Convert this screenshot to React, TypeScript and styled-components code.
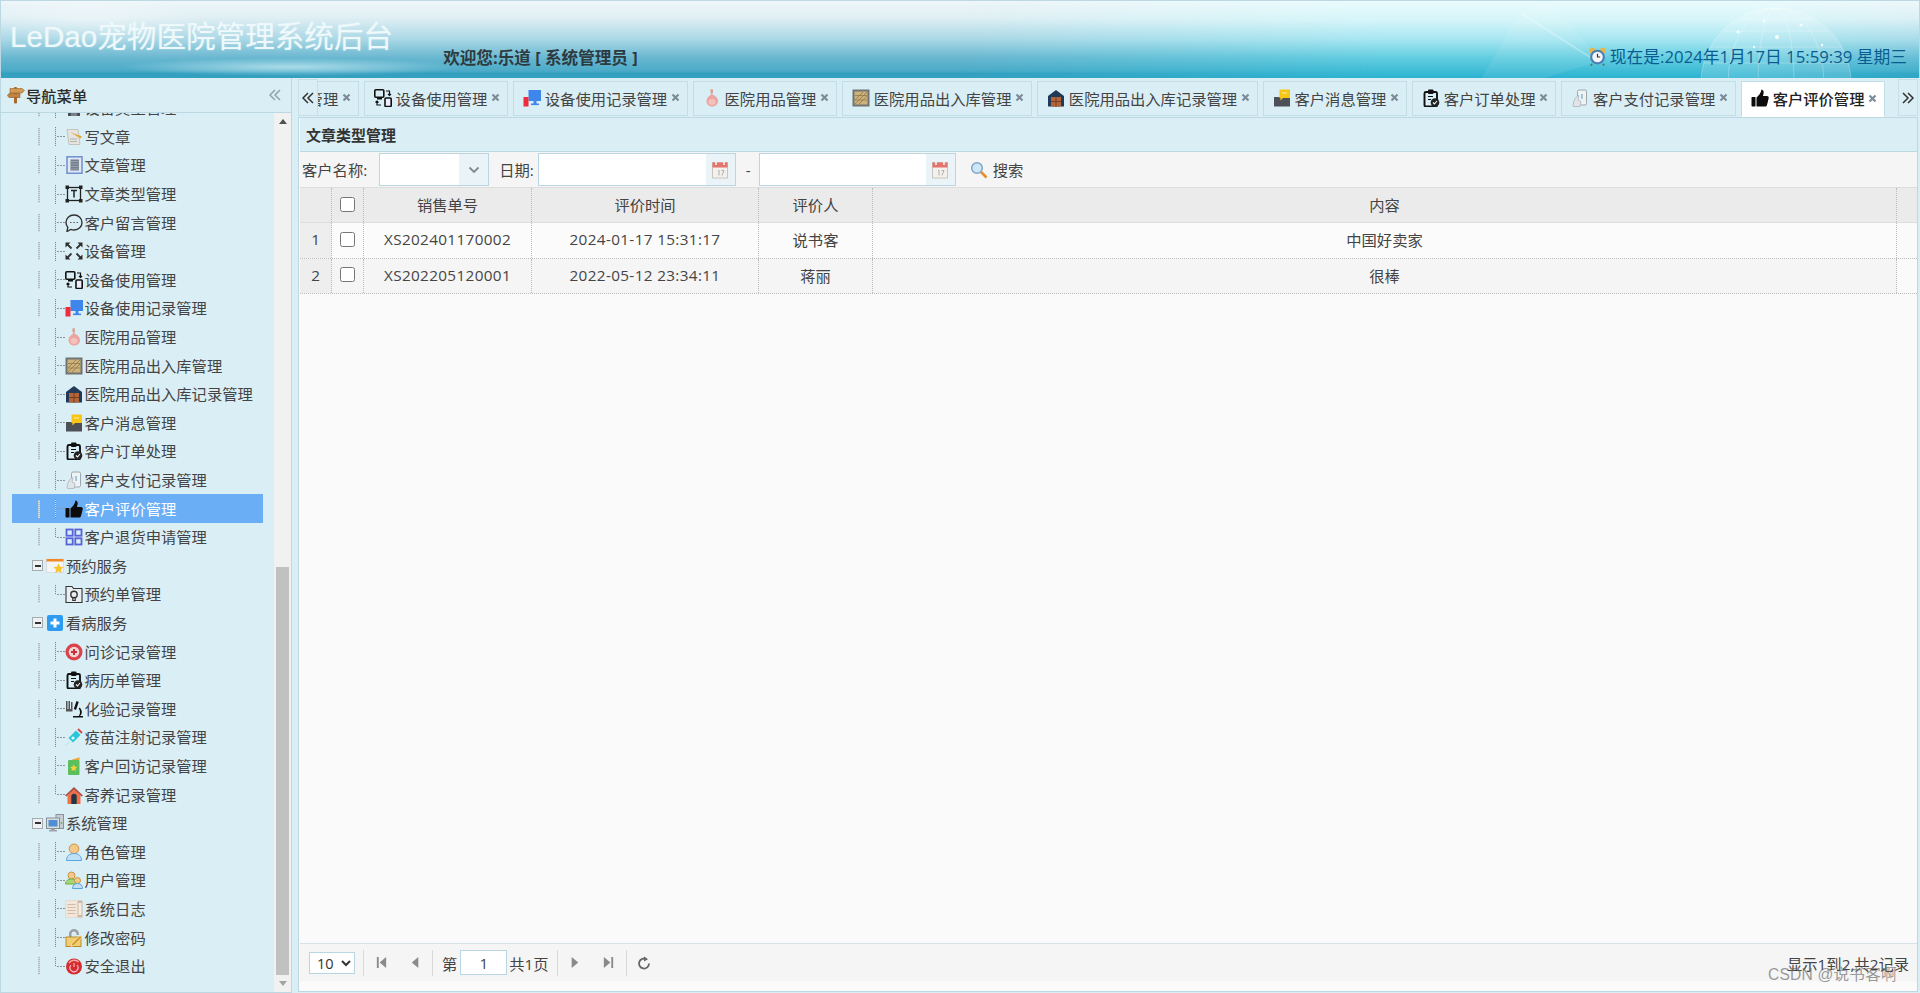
import React from "react";
import styled, { createGlobalStyle } from "styled-components";

const Global = createGlobalStyle`
  html, body { margin: 0; padding: 0; height: 100%; overflow: hidden; }
  body {
    font-family: "Open Sans", "Noto Sans CJK SC", sans-serif;
    font-size: 15.3px;
    color: #444;
    background: #daeef5;
  }
  * { box-sizing: border-box; }
`;

/* ---------- icons ---------- */
type IconName =
  | "write" | "article" | "textbox" | "chat" | "devices" | "swap" | "monitor" | "flask" | "crate"
  | "warehouse" | "msg" | "clipboard" | "pay" | "thumb" | "grid" | "star" | "clinic" | "plusBlue"
  | "plusRed" | "microscope" | "syringe" | "card" | "house" | "computer" | "user" | "users" | "book"
  | "lock" | "power" | "generic";

const drawings: Record<IconName, React.ReactNode> = {
  write: (<>
    <path d="M2 1.500h11l2 15H4z" fill="#e4e4e0" stroke="#c4c4be" />
    <path d="M5 11h7M5 13.500h7" stroke="#b5b5b0" />
    <path d="M5 4l12 4.500-1.500 2z" fill="#e2a92c" />
  </>),
  article: (<>
    <rect x="2" y=".8" width="15" height="16.500" fill="#dfe7f4" stroke="#6f8fd0" strokeWidth="1.500" />
    <rect x="5.500" y="3.500" width="8.500" height="11" fill="#737f8c" />
    <path d="M5.500 5.500h8.500M5.500 8h8.500M5.500 10.500h8.500M5.500 13h8.500" stroke="#a9b2bc" strokeWidth=".7" />
  </>),
  textbox: (<>
    <rect x="2.500" y="2.500" width="13" height="13" fill="none" stroke="#222" strokeWidth="1.300" />
    <path d="M.5.5h3.500v3.500H.5zM14 .5h3.500v3.500H14zM.5 14h3.500v3.500H.5zM14 14h3.500v3.500H14z" fill="#222" />
    <path d="M6 5.500h6M9 5.500v7" stroke="#222" strokeWidth="1.500" fill="none" />
  </>),
  chat: (<>
    <path d="M9 1c4.700 0 8 3.200 8 7.500s-3.300 7.500-8 7.500c-1.200 0-2.300-.2-3.300-.6L2 17.500l.8-4.300C1.700 11.900 1 10.300 1 8.500 1 4.200 4.300 1 9 1z" fill="none" stroke="#333" strokeWidth="1.400" />
    <path d="M5 8.500h1.500M8.300 8.500h1.500M11.600 8.500h1.500" stroke="#555" strokeWidth="1.200" />
  </>),
  devices: (<>
    <path d="M2 2l4.500 4.500M16 2l-4.500 4.500M2 16l4.500-4.500M16 16l-4.500-4.500" stroke="#333" strokeWidth="1.800" />
    <path d="M.5.5h5l-5 5zM17.500.5h-5l5 5zM.5 17.500h5l-5-5zM17.500 17.500h-5l5-5z" fill="#2e2e2e" />
  </>),
  swap: (<>
    <rect x=".8" y=".8" width="9" height="7.500" rx="1" fill="none" stroke="#111" strokeWidth="1.600" />
    <rect x="3" y="8" width="5" height="2.500" fill="#111" />
    <rect x="11" y="9" width="6.200" height="8.500" rx="1" fill="#eef" stroke="#111" strokeWidth="1.600" />
    <path d="M12 2h3.500v4M14 5l1.500 1.500L17 5M7 16H3v-3.500M1.500 13.500L3 12l1.500 1.500" fill="none" stroke="#111" strokeWidth="1.200" />
  </>),
  monitor: (<>
    <rect x="5.500" y="1" width="12.500" height="11" fill="#3f86ec" />
    <rect x="10.500" y="12" width="3" height="3" fill="#3f86ec" />
    <rect x="8" y="14.500" width="8" height="1.600" fill="#3f86ec" />
    <rect x=".5" y="8" width="5" height="9.500" fill="#ef2b3c" />
  </>),
  flask: (<>
    <path d="M7.500 .5h2.500l-.5 5c3.300 1.400 5.500 3.500 5.500 6.500 0 3.300-2.600 5.500-5.800 5.500S3.500 15.300 3.500 12c0-2.800 1.900-4.700 4.500-6.300z" fill="#eca5a0" />
    <path d="M7.500 .5h2.500l-.3 3.500H7.700z" fill="#cfa78f" />
    <ellipse cx="9" cy="13" rx="3.500" ry="3" fill="#f4c2bd" />
  </>),
  crate: (<>
    <rect x=".5" y=".5" width="17" height="17" fill="#6f7472" />
    <rect x="2.500" y="2.500" width="13" height="13" fill="#cdb27c" />
    <path d="M3 15L15 3M7 15l8-8M3 11l8-8M3 6.500h12M3 11h12" stroke="#92794a" strokeWidth=".8" />
  </>),
  warehouse: (<>
    <path d="M1 7L9 1l8 6v10.500H1z" fill="#223a5a" />
    <rect x="4" y="8" width="10" height="9.500" fill="#b5643a" />
    <path d="M4 12.500h10M9 8v9.500" stroke="#6d3a20" strokeWidth=".9" />
  </>),
  msg: (<>
    <path d="M1 8h11V6h5v11.500H1z" fill="#4d5157" />
    <path d="M6.500.5h10.500v8.500h-7l-2.500 2.500V9H6.500z" fill="#f7c514" />
    <path d="M9 4h5" stroke="#fff1a8" />
  </>),
  clipboard: (<>
    <rect x="2.500" y="3" width="12.500" height="14.500" rx="1.500" fill="none" stroke="#111" strokeWidth="1.900" />
    <rect x="6" y=".5" width="5.500" height="4.500" rx="1" fill="#111" />
    <circle cx="13" cy="13.500" r="4.300" fill="#222" />
    <path d="M11 13.500l1.500 1.500 2.500-3" stroke="#fff" strokeWidth="1.100" fill="none" />
    <path d="M6 7.500h5M6 10.500h3" stroke="#111" strokeWidth="1" />
  </>),
  pay: (<>
    <rect x="6.500" y="1" width="9" height="15" rx="1.500" fill="#eef4f6" stroke="#9ea6aa" />
    <path d="M2 17c.5-4.500 1.500-7 3.500-9L8 6.500 7 11l3 1.500-1 5H3z" fill="#dfe5e8" stroke="#b8bec2" />
    <path d="M11 5v5" stroke="#6aa8c8" strokeWidth="1.200" />
  </>),
  thumb: (<>
    <rect x=".5" y="8" width="4" height="9.500" rx=".8" fill="#0c0c0c" />
    <path d="M5.500 8.500C8 6.500 10 3.500 10.500.5c1.800.3 2.500 2 2 4L12 7h4c1.300 0 2 1.200 1.700 2.200L16 16c-.3 1-1 1.500-2 1.500H5.500z" fill="#0c0c0c" />
  </>),
  grid: (<>
    <rect x="1.500" y="1.500" width="6.200" height="6.200" fill="none" stroke="#5562d8" strokeWidth="1.800" />
    <rect x="10.300" y="1.500" width="6.200" height="6.200" fill="none" stroke="#5562d8" strokeWidth="1.800" />
    <rect x="1.500" y="10.300" width="6.200" height="6.200" fill="none" stroke="#5562d8" strokeWidth="1.800" />
    <rect x="10.300" y="10.300" width="6.200" height="6.200" fill="none" stroke="#5562d8" strokeWidth="1.800" />
  </>),
  star: (<>
    <rect x=".5" y="2" width="17" height="13.500" fill="#f2f4f6" stroke="#d8dde0" />
    <rect x=".5" y="2" width="17" height="2.500" fill="#f08a24" />
    <path d="M12.500 6.500l1.600 3.200 3.400.4-2.500 2.400.7 3.500-3.200-1.700-3.200 1.700.7-3.500-2.500-2.400 3.400-.4z" fill="#f7c52a" />
  </>),
  clinic: (<>
    <path d="M1 1.500h6l1.500 2H17v14H1z" fill="#e8eef1" stroke="#333" strokeWidth="1.100" />
    <circle cx="9" cy="9.500" r="3.200" fill="none" stroke="#333" strokeWidth="1.400" />
    <path d="M7.800 12.500v3h2.400v-3" fill="none" stroke="#333" strokeWidth="1.200" />
  </>),
  plusBlue: (<>
    <rect x="1" y="1" width="16" height="16" rx="2" fill="#2d9bf0" />
    <path d="M9 4.500v9M4.500 9h9" stroke="#fff" strokeWidth="3" />
  </>),
  plusRed: (<>
    <circle cx="9" cy="9" r="8.500" fill="#d9434b" />
    <circle cx="9" cy="9" r="5.300" fill="#f4d6d6" />
    <path d="M9 6v6M6 9h6" stroke="#c8323c" strokeWidth="2" />
  </>),
  microscope: (<>
    <path d="M8 17.500h10V16h-3c2.200-1.500 2.800-5.500-.3-8.500l-1 1c1.800 2 1.800 5.200 0 7.500H8z" fill="#111" />
    <path d="M11.500 1l2.200 1-2.700 8-2.200-1z" fill="#111" />
    <path d="M1 1h1.500v8H1zM3.500 1H5v8H3.500zM6 2h1.500v7H6z" fill="#555" />
    <rect x="1" y="9" width="6.500" height="2.500" fill="#555" />
  </>),
  syringe: (<>
    <path d="M3.500 10l7.500-7.500 4.500 4.500L8 14.500z" fill="#27c6d8" />
    <path d="M.5 17.500l3.500-3.500" stroke="#bfe6ec" strokeWidth="1.500" />
    <path d="M13 1l4 4" stroke="#d04a50" strokeWidth="2" />
    <circle cx="8" cy="10" r="1.600" fill="#e8f9fb" />
  </>),
  card: (<>
    <rect x="3" y="3" width="11.500" height="15" rx="1" fill="#5cbf5c" />
    <path d="M6 3l8.500-2.800V3z" fill="#f0a73a" />
    <path d="M8.700 7.500l1.200 2.300 2.300.3-1.700 1.700.4 2.300-2.200-1.200-2.200 1.200.4-2.300L5.200 10.100l2.300-.3z" fill="#f7d23a" />
  </>),
  house: (<>
    <path d="M0 9.500L9 1l9 8.500-1.500 1L9 4 1.500 10.500z" fill="#a94e48" />
    <path d="M2.500 9L9 3.500 15.500 9v9h-13z" fill="#ec7048" />
    <path d="M6.300 18V10.500a2.700 2.700 0 0 1 5.400 0V18z" fill="#223645" />
  </>),
  computer: (<>
    <rect x="10" y=".5" width="7.500" height="14" fill="#c5ccd2" stroke="#8a939a" />
    <circle cx="15.500" cy="9" r=".9" fill="#4cc04c" />
    <rect x=".5" y="4" width="13" height="10.500" fill="#d8dde0" stroke="#858e95" />
    <rect x="2.500" y="6" width="9" height="6.500" fill="#4f8ed0" />
    <path d="M5 14.500h4v1.500h2v1.500H3V16h2z" fill="#9aa3aa" />
  </>),
  user: (<>
    <circle cx="9" cy="5.800" r="4.800" fill="#f2c98a" stroke="#c99445" />
    <path d="M1.500 17.500c0-4.500 3-7 7.500-7s7.500 2.500 7.500 7z" fill="#bfe0f8" stroke="#5aa4e0" />
  </>),
  users: (<>
    <circle cx="6.500" cy="4.500" r="3.500" fill="#f2c98a" stroke="#c99445" />
    <path d="M.5 13c0-3 2.500-5 6-5s5 2 5 5z" fill="#a7d67a" stroke="#6fae3c" />
    <circle cx="12.500" cy="9.500" r="3" fill="#f2c98a" stroke="#c99445" />
    <path d="M7.500 17.500c0-3 2-5 5-5s5 2 5 5z" fill="#bfe0f8" stroke="#5aa4e0" />
  </>),
  book: (<>
    <rect x=".5" y=".5" width="17" height="17" fill="#cdb7a2" />
    <rect x=".5" y=".5" width="12" height="17" fill="#f2e6da" />
    <path d="M2.500 4.500h8M2.500 7.500h8M2.500 10.500h8M2.500 13.500h8" stroke="#d4bda7" />
    <rect x="13.500" y="3" width="3" height="12" fill="#f3ece3" />
  </>),
  lock: (<>
    <path d="M4 8V5a5 5 0 0 1 10 0v1h-2.500V5a2.500 2.500 0 0 0-5 0v3z" fill="#9aa0a4" />
    <rect x="1" y="8" width="15" height="9.500" fill="#f0cd72" stroke="#b98a24" />
    <path d="M7 14.500l8-8 2 2-8 8-3 .8z" fill="#d99a22" stroke="#fff" strokeWidth=".6" />
  </>),
  power: (<>
    <circle cx="9" cy="9.500" r="8" fill="#d32c2c" />
    <path d="M4 6c2-3 7-4 9.500-1" stroke="#f4a7a7" strokeWidth="1.600" fill="none" />
    <path d="M6 8a4 4 0 1 0 6 0" stroke="#fbd" strokeWidth="1.100" fill="none" />
    <path d="M9 6v4" stroke="#fbd" strokeWidth="1.100" />
  </>),
  generic: (<>
    <path d="M3 8l6-6 6 6v9H3z" fill="#4a4f55" />
    <rect x="6" y="10" width="6" height="7" fill="#7a8088" />
  </>),
};

const IconSvg = styled.svg<{ $size?: number }>`
  width: ${(p) => p.$size ?? 18}px;
  height: ${(p) => p.$size ?? 18}px;
  flex: none;
  display: block;
`;

const Icon = ({ name, size }: { name: IconName; size?: number }) => (
  <IconSvg viewBox="0 0 18 18" $size={size}>{drawings[name]}</IconSvg>
);

const ClockIcon = () => (
  <IconSvg viewBox="0 0 18 18" $size={19}>
    <circle cx="4" cy="3.500" r="2.800" fill="#e9b646" />
    <circle cx="14" cy="3.500" r="2.800" fill="#e9b646" />
    <path d="M4 16l-1.500 1.500M14 16l1.500 1.500" stroke="#666" strokeWidth="1.500" />
    <circle cx="9" cy="9.500" r="7" fill="#4b7fb5" />
    <circle cx="9" cy="9.500" r="5" fill="#f3f5f6" />
    <path d="M9 6.500v3h2.500" stroke="#333" strokeWidth="1.100" fill="none" />
  </IconSvg>
);

const SignIcon = () => (
  <IconSvg viewBox="0 0 18 18" $size={18}>
    <rect x="7" y="1" width="3" height="16.500" rx="1" fill="#a56a2a" />
    <path d="M3 2.500h12l2.500 2-2.500 2.500H3z" fill="#d49a52" stroke="#96622a" strokeWidth=".6" />
    <path d="M13 7.500H2L.5 9.500 2 11.500h11z" fill="#c08440" stroke="#8d5a26" strokeWidth=".6" />
  </IconSvg>
);

const Chevrons = ({ flip, color }: { flip?: boolean; color: string }) => (
  <IconSvg viewBox="0 0 14 14" $size={14} style={flip ? { transform: "scaleX(-1)" } : undefined}>
    <path d="M7 2L2 7l5 5M12 2L7 7l5 5" fill="none" stroke={color} strokeWidth="1.500" />
  </IconSvg>
);

const CloseMark = () => (
  <IconSvg viewBox="0 0 9 9" $size={9}>
    <path d="M1.500 1.500l6 6M7.500 1.500l-6 6" stroke="#7d8b99" strokeWidth="2.200" />
  </IconSvg>
);

const CalendarIcon = () => (
  <IconSvg viewBox="0 0 18 18" $size={18}>
    <rect x="1.500" y="1.500" width="15" height="15.500" fill="#f4f1ec" stroke="#c9c4bc" />
    <rect x="1.500" y="1.500" width="15" height="5" fill="#e4736c" />
    <path d="M5 1v3M13 1v3" stroke="#fff" strokeWidth="1.400" />
    <path d="M7 9.500h1v5M10.500 9.500h2.500L11 14.500" stroke="#a9a9a9" strokeWidth=".9" fill="none" />
  </IconSvg>
);

const SearchIcon = () => (
  <IconSvg viewBox="0 0 18 18" $size={18}>
    <circle cx="7" cy="7" r="5.300" fill="#cfe6f7" stroke="#7da6c6" strokeWidth="1.500" />
    <path d="M11 11l5.500 5.500" stroke="#e0902c" strokeWidth="2.600" />
  </IconSvg>
);

/* ---------- header ---------- */
const Page = styled.div`
  width: 1920px;
  height: 993px;
  display: flex;
  flex-direction: column;
  overflow: hidden;
  position: relative;
`;

const Header = styled.header`
  height: 78px;
  flex: none;
  display: flex;
  position: relative;
  overflow: hidden;
  border-top: 1px solid #bcd9e3;
  border-left: 1px solid #bcd9e3;
  border-right: 1px solid #bcd9e3;
  background:
    radial-gradient(ellipse 170px 9px at 290px 66px, rgba(200,235,243,.75), transparent),
    radial-gradient(ellipse 110px 26px at 90px 18px, rgba(255,255,255,.35), transparent),
    linear-gradient(to bottom, transparent 91%, #34a0c0 94%),
    linear-gradient(to bottom, #eef6f9 0%, #dfeff4 22%, #a9d7e5 50%, #68b7d0 74%, #3ba4c3 100%);
  &::before {
    content: "";
    position: absolute;
    inset: 0;
    background: linear-gradient(to bottom, #eafbfd 0%, #d4f5f9 25%, #a6e6f1 50%, #62cde0 74%, #2bb3d1 100%);
    -webkit-mask-image: linear-gradient(to right, transparent 50%, #000 72%, #000 90%, rgba(0,0,0,.3) 100%);
    mask-image: linear-gradient(to right, transparent 50%, #000 72%, #000 90%, rgba(0,0,0,.3) 100%);
  }
`;

const Globe = styled.svg`
  position: absolute;
  left: 1675px;
  top: 0;
  width: 200px;
  height: 78px;
`;

const Shard = styled.svg`
  position: absolute;
  left: 1480px;
  top: 0;
  width: 200px;
  height: 78px;
`;

const Title = styled.h1`
  position: relative;
  margin: 17px 0 0 9px;
  font: 400 29.6px "Liberation Sans", "Noto Sans CJK SC", sans-serif;
  line-height: 38px;
  color: #eff9fb;
  text-shadow: 0 0 2px rgba(255,255,255,.35);
  white-space: nowrap;
`;

const Welcome = styled.div`
  position: relative;
  align-self: flex-end;
  margin: 0 0 9px 50px;
  font-size: 16.6px;
  font-weight: 700;
  color: #2d3a3f;
  white-space: nowrap;
`;

const ClockText = styled.div`
  position: relative;
  align-self: flex-end;
  margin: 0 12px 10px auto;
  display: flex;
  align-items: center;
  gap: 3px;
  font-size: 16.75px;
  color: #0a5c90;
  white-space: nowrap;
`;

/* ---------- layout ---------- */
const Body = styled.div`
  flex: 1;
  min-height: 0;
  display: flex;
`;

const Sidebar = styled.aside`
  width: 292px;
  flex: none;
  display: flex;
  flex-direction: column;
  border-left: 1px solid #bcd9e3;
  border-right: 1px solid #bcd9e3;
  border-bottom: 1px solid #bcd9e3;
`;

const SideHead = styled.div`
  height: 35px;
  flex: none;
  display: flex;
  align-items: center;
  padding: 0 9px 0 6px;
  gap: 1px;
  border-bottom: 1px solid #bcd9e3;
  font-weight: 500;
  color: #2c2c2c;
`;

const SideCollapse = styled.span`
  margin-left: auto;
`;

const SideBody = styled.div`
  flex: 1;
  min-height: 0;
  display: flex;
`;

const Tree = styled.div`
  flex: 1;
  min-width: 0;
  overflow: hidden;
`;

const TreeInner = styled.div`
  margin-top: -19px;
`;

const TreeRow = styled.div<{ $active?: boolean }>`
  height: 28.6px;
  margin: 0 11px 0 11px;
  padding-left: 26px;
  display: flex;
  align-items: center;
  white-space: nowrap;
  color: ${(p) => (p.$active ? "#fff" : "#444")};
  background: ${(p) => (p.$active ? "#6aaef5" : "transparent")};
`;

const GuideOuter = styled.span`
  width: 17px;
  height: 18px;
  flex: none;
  background: repeating-linear-gradient(to bottom, #b4babd 0 1px, #d5dfe3 1px 2px) 0 0 / 2px 100% no-repeat;
`;

const Elbow = styled.span<{ $last?: boolean }>`
  width: 10px;
  height: ${(p) => (p.$last ? "10px" : "19px")};
  flex: none;
  position: relative;
  ${(p) => (p.$last ? "align-self: flex-start; margin-top: 5px;" : "")}
  background: repeating-linear-gradient(to bottom, #80868a 0 1px, #d5dfe3 1px 2px) 0 0 / 1px 100% no-repeat;
  &::after {
    content: "";
    position: absolute;
    left: 2px;
    top: 9px;
    width: 8px;
    height: 1px;
    background: repeating-linear-gradient(to right, #8f9598 0 2px, transparent 2px 3px);
  }
`;

const Expander = styled.span`
  width: 11px;
  height: 11px;
  flex: none;
  margin-left: -6px;
  margin-right: 3px;
  position: relative;
  border: 1px solid #a5abaf;
  background: #eef2f4;
  &::after {
    content: "";
    position: absolute;
    left: 1.5px;
    right: 1.5px;
    top: 3.5px;
    height: 2px;
    background: #333;
  }
`;

const NodeText = styled.span<{ $parent?: boolean }>`
  margin-left: ${(p) => (p.$parent ? "2px" : "1.5px")};
  position: relative;
  top: -1px;
`;

const Scrollbar = styled.div`
  width: 17px;
  flex: none;
  display: flex;
  flex-direction: column;
  align-items: center;
  background: #f1f1f1;
`;

const ScrollArrow = styled.div<{ $down?: boolean }>`
  height: 17px;
  flex: none;
  display: flex;
  align-items: center;
  justify-content: center;
  &::before {
    content: "";
    border-left: 4px solid transparent;
    border-right: 4px solid transparent;
    ${(p) => (p.$down ? "border-top: 5px solid #a3a3a3;" : "border-bottom: 5px solid #505050;")}
  }
`;

const ScrollSpace = styled.div`
  flex: 1;
`;

const ScrollThumb = styled.div`
  width: 13px;
  height: 408px;
  flex: none;
  background: #c1c1c1;
`;

const Main = styled.main`
  flex: 1;
  min-width: 0;
  display: flex;
  flex-direction: column;
  margin-left: 6px;
`;

/* ---------- tabs ---------- */
const TabStrip = styled.div`
  height: 39px;
  flex: none;
  display: flex;
  padding: 1px 2px 0 0;
`;

const StripButton = styled.div<{ $right?: boolean }>`
  width: 20px;
  height: 37px;
  flex: none;
  display: flex;
  align-items: center;
  justify-content: center;
  background: #daeef5;
  border: 1px solid #c6dfe8;
  ${(p) => (p.$right ? "margin-left: 12px;" : "")}
`;

const TabScroller = styled.div`
  flex: 1;
  min-width: 0;
  overflow: hidden;
  display: flex;
  gap: 4.4px;
  padding-top: 2px;
`;

const Tab = styled.div<{ $active?: boolean; $offset?: number }>`
  height: ${(p) => (p.$active ? "36px" : "35px")};
  flex: none;
  display: flex;
  align-items: center;
  padding: 0 7px 2px 9px;
  margin-left: ${(p) => p.$offset ?? 0}px;
  white-space: nowrap;
  border: 1px solid #c3dde6;
  border-bottom-color: ${(p) => (p.$active ? "#fff" : "#c3dde6")};
  background: ${(p) => (p.$active ? "#fff" : "#daeef5")};
  color: ${(p) => (p.$active ? "#222" : "#444")};
  font-weight: ${(p) => (p.$active ? 500 : 400)};
  position: relative;
`;

const TabText = styled.span`
  margin: 0 4px;
`;

/* ---------- panel ---------- */
const Panel = styled.section`
  flex: 1;
  min-height: 0;
  display: flex;
  flex-direction: column;
  margin: 0 2px 1px 0;
  border: 1px solid #bcd9e3;
  background: #fafafa;
`;

const PanelTitle = styled.div`
  height: 34px;
  flex: none;
  display: flex;
  align-items: center;
  padding: 0 0 1px 6px;
  margin-left: 1px;
  font-weight: 700;
  font-size: 15px;
  color: #333;
  background: #daeef5;
  border-bottom: 1px solid #bcd9e3;
`;

const Toolbar = styled.div`
  height: 35px;
  flex: none;
  display: flex;
  align-items: center;
  margin-left: 1px;
  padding-left: 2px;
  background: #f5f5f5;
  white-space: nowrap;
`;

const ToolLabel = styled.span<{ $left?: number }>`
  margin-left: ${(p) => p.$left ?? 0}px;
  position: relative;
  top: -1px;
`;

const ComboBox = styled.div<{ $width: number; $left: number }>`
  width: ${(p) => p.$width}px;
  height: 33px;
  margin-left: ${(p) => p.$left}px;
  flex: none;
  display: flex;
  background: #fff;
  border: 1px solid #b9d7e2;
`;

const ComboValue = styled.div`
  flex: 1;
`;

const ComboButton = styled.div`
  width: 29px;
  flex: none;
  display: flex;
  align-items: center;
  justify-content: center;
  background: #eaf4f8;
`;

const Dash = styled.span`
  margin: 0 8px 0 10px;
`;

const SearchButton = styled.div`
  display: flex;
  align-items: center;
  gap: 5px;
  margin-left: 14px;
`;

const Grid = styled.div`
  flex: 1;
  min-height: 0;
  margin-left: 1px;
  background: #fafafa;
`;

const gridColumns = "32px 32px 168px 227px 114px 1fr 20px";

const HeadRow = styled.div`
  height: 36px;
  display: grid;
  grid-template-columns: ${gridColumns};
  background: #ebebeb;
  border-top: 1px solid #ddd;
  border-bottom: 1px solid #ddd;
`;

const DataRow = styled.div`
  height: 35.5px;
  display: grid;
  grid-template-columns: ${gridColumns};
  border-bottom: 1px dotted #bbb;
`;

const Cell = styled.div<{ $alt?: boolean; $num?: boolean; $plain?: boolean; $digits?: boolean }>`
  display: flex;
  align-items: center;
  justify-content: center;
  padding-bottom: 2px;
  white-space: nowrap;
  letter-spacing: ${(p) => (p.$digits ? ".35px" : "0")};
  border-right: ${(p) => (p.$plain ? "none" : "1px dotted #bbb")};
  background: ${(p) => (p.$plain ? "transparent" : p.$num ? "#eeeeee" : p.$alt ? "#f5f5f5" : "#fbfbfb")};
`;

const HeadCell = styled(Cell)`
  background: transparent;
`;

const Check = styled.input`
  width: 15px;
  height: 15px;
  margin: 0;
`;

/* ---------- pager ---------- */
const Pager = styled.footer`
  height: 38px;
  flex: none;
  display: flex;
  align-items: center;
  margin-left: 1px;
  padding: 0 8px 0 9px;
  background: #f5f5f5;
  border-top: 1px solid #d7e2e6;
`;

const Below = styled.div`
  height: 10px;
  flex: none;
  background: #fafafa;
`;

const PageSize = styled.select`
  width: 46px;
  height: 22px;
  background: #fff;
  border: 1px solid #b9d7e2;
  font: 400 14.5px "Open Sans", sans-serif;
  color: #333;
  padding: 0 0 0 3px;
`;

const Divider = styled.span<{ $before?: number; $after?: number }>`
  width: 1px;
  height: 26px;
  flex: none;
  background: #d9d9d9;
  margin-left: ${(p) => p.$before ?? 0}px;
  margin-right: ${(p) => p.$after ?? 0}px;
`;

const PagerBtn = styled.span`
  width: 34px;
  display: flex;
  justify-content: center;
  flex: none;
`;

const PageInput = styled.div`
  width: 47px;
  height: 25px;
  margin: 0 2px 0 3px;
  flex: none;
  display: flex;
  align-items: center;
  justify-content: center;
  background: #fff;
  border: 1px solid #b9d7e2;
`;

const PagerLabel = styled.span`
  white-space: nowrap;
`;

const PagerInfo = styled.span`
  margin-left: auto;
  white-space: nowrap;
`;

const Watermark = styled.div`
  position: absolute;
  left: 1768px;
  top: 964px;
  font: 400 15.6px "Liberation Sans", "Noto Sans CJK SC", sans-serif;
  line-height: 22px;
  color: rgba(105, 105, 105, 0.68);
  letter-spacing: .2px;
  white-space: nowrap;
`;

const PagerGlyph = ({ d }: { d: string }) => (
  <IconSvg viewBox="0 0 12 14" $size={13}><path d={d} fill="#8a8a8a" /></IconSvg>
);

const Tick = () => (
  <IconSvg viewBox="0 0 12 8" $size={12}>
    <path d="M1.500 1.500L6 6l4.500-4.500" fill="none" stroke="#7d8a90" strokeWidth="1.800" />
  </IconSvg>
);

/* ---------- data ---------- */
type Node = { text: string; icon: IconName; parent?: boolean; last?: boolean; active?: boolean };

const nodes: Node[] = [
  { text: "设备类型管理", icon: "generic" },
  { text: "写文章", icon: "write" },
  { text: "文章管理", icon: "article" },
  { text: "文章类型管理", icon: "textbox" },
  { text: "客户留言管理", icon: "chat" },
  { text: "设备管理", icon: "devices" },
  { text: "设备使用管理", icon: "swap" },
  { text: "设备使用记录管理", icon: "monitor" },
  { text: "医院用品管理", icon: "flask" },
  { text: "医院用品出入库管理", icon: "crate" },
  { text: "医院用品出入库记录管理", icon: "warehouse" },
  { text: "客户消息管理", icon: "msg" },
  { text: "客户订单处理", icon: "clipboard" },
  { text: "客户支付记录管理", icon: "pay" },
  { text: "客户评价管理", icon: "thumb", active: true },
  { text: "客户退货申请管理", icon: "grid", last: true },
  { text: "预约服务", icon: "star", parent: true },
  { text: "预约单管理", icon: "clinic", last: true },
  { text: "看病服务", icon: "plusBlue", parent: true },
  { text: "问诊记录管理", icon: "plusRed" },
  { text: "病历单管理", icon: "clipboard" },
  { text: "化验记录管理", icon: "microscope" },
  { text: "疫苗注射记录管理", icon: "syringe" },
  { text: "客户回访记录管理", icon: "card" },
  { text: "寄养记录管理", icon: "house", last: true },
  { text: "系统管理", icon: "computer", parent: true },
  { text: "角色管理", icon: "user" },
  { text: "用户管理", icon: "users" },
  { text: "系统日志", icon: "book" },
  { text: "修改密码", icon: "lock" },
  { text: "安全退出", icon: "power", last: true },
];

const tabs: { text: string; icon: IconName; active?: boolean; offset?: number }[] = [
  { text: "设备管理", icon: "devices", offset: -73 },
  { text: "设备使用管理", icon: "swap" },
  { text: "设备使用记录管理", icon: "monitor" },
  { text: "医院用品管理", icon: "flask" },
  { text: "医院用品出入库管理", icon: "crate" },
  { text: "医院用品出入库记录管理", icon: "warehouse" },
  { text: "客户消息管理", icon: "msg" },
  { text: "客户订单处理", icon: "clipboard" },
  { text: "客户支付记录管理", icon: "pay" },
  { text: "客户评价管理", icon: "thumb", active: true },
];

const rows = [
  { no: "XS202401170002", time: "2024-01-17 15:31:17", who: "说书客", body: "中国好卖家" },
  { no: "XS202205120001", time: "2022-05-12 23:34:11", who: "蒋丽", body: "很棒" },
];

export default function App() {
  return (
    <Page>
      <Global />
      <Header>
        <Shard viewBox="0 0 200 78">
          <path d="M0 78L40 10 70 0 120 60 60 78z" fill="rgba(255,255,255,.08)" />
          <path d="M40 12L118 62" stroke="rgba(255,255,255,.3)" strokeWidth="1.500" />
        </Shard>
        <Globe viewBox="0 0 200 78">
          <circle cx="100" cy="82" r="75" fill="rgba(255,255,255,.16)" />
          <g fill="none" stroke="rgba(255,255,255,.36)" strokeWidth=".7">
            <ellipse cx="100" cy="82" rx="75" ry="75" />
            <ellipse cx="100" cy="82" rx="48" ry="75" />
            <ellipse cx="100" cy="82" rx="18" ry="75" />
            <path d="M35 46h130M48 30h104M66 18h68M28 62h144" />
          </g>
          <g fill="rgba(255,255,255,.9)">
            <circle cx="62" cy="31" r="1.500" />
            <circle cx="101" cy="36" r="2" />
            <circle cx="125" cy="24" r="1.500" />
            <circle cx="88" cy="20" r="1.200" />
            <circle cx="146" cy="44" r="1.200" />
            <circle cx="78" cy="46" r="1.200" />
          </g>
        </Globe>
        <Title>LeDao宠物医院管理系统后台</Title>
        <Welcome>欢迎您:乐道 [ 系统管理员 ]</Welcome>
        <ClockText><ClockIcon />现在是:2024年1月17日 15:59:39 星期三</ClockText>
      </Header>
      <Body>
        <Sidebar>
          <SideHead>
            <SignIcon />导航菜单
            <SideCollapse><Chevrons color="#8fa5ae" /></SideCollapse>
          </SideHead>
          <SideBody>
            <Tree>
              <TreeInner>
                {nodes.map((n) => (
                  <TreeRow key={n.text} $active={n.active}>
                    {n.parent ? (
                      <>
                        <Expander />
                        <Icon name={n.icon} />
                        <NodeText $parent>{n.text}</NodeText>
                      </>
                    ) : (
                      <>
                        <GuideOuter />
                        <Elbow $last={n.last} />
                        <Icon name={n.icon} />
                        <NodeText>{n.text}</NodeText>
                      </>
                    )}
                  </TreeRow>
                ))}
              </TreeInner>
            </Tree>
            <Scrollbar>
              <ScrollArrow />
              <ScrollSpace />
              <ScrollThumb />
              <ScrollArrow $down />
            </Scrollbar>
          </SideBody>
        </Sidebar>
        <Main>
          <TabStrip>
            <StripButton><Chevrons color="#333" /></StripButton>
            <TabScroller>
              {tabs.map((t) => (
                <Tab key={t.text} $active={t.active} $offset={t.offset}>
                  <Icon name={t.icon} />
                  <TabText>{t.text}</TabText>
                  <CloseMark />
                </Tab>
              ))}
            </TabScroller>
            <StripButton $right><Chevrons flip color="#333" /></StripButton>
          </TabStrip>
          <Panel>
            <PanelTitle>文章类型管理</PanelTitle>
            <Toolbar>
              <ToolLabel>客户名称:</ToolLabel>
              <ComboBox $width={110} $left={12}><ComboValue /><ComboButton><Tick /></ComboButton></ComboBox>
              <ToolLabel $left={10}>日期:</ToolLabel>
              <ComboBox $width={198} $left={4}><ComboValue /><ComboButton><CalendarIcon /></ComboButton></ComboBox>
              <Dash>-</Dash>
              <ComboBox $width={197} $left={0}><ComboValue /><ComboButton><CalendarIcon /></ComboButton></ComboBox>
              <SearchButton><SearchIcon /><ToolLabel>搜索</ToolLabel></SearchButton>
            </Toolbar>
            <Grid>
              <HeadRow>
                <HeadCell />
                <HeadCell><Check type="checkbox" /></HeadCell>
                <HeadCell>销售单号</HeadCell>
                <HeadCell>评价时间</HeadCell>
                <HeadCell>评价人</HeadCell>
                <HeadCell>内容</HeadCell>
                <HeadCell $plain />
              </HeadRow>
              {rows.map((r, i) => (
                <DataRow key={r.no}>
                  <Cell $num>{i + 1}</Cell>
                  <Cell $alt={i === 1}><Check type="checkbox" /></Cell>
                  <Cell $alt={i === 1} $digits>{r.no}</Cell>
                  <Cell $alt={i === 1} $digits>{r.time}</Cell>
                  <Cell $alt={i === 1}>{r.who}</Cell>
                  <Cell $alt={i === 1}>{r.body}</Cell>
                  <Cell $plain />
                </DataRow>
              ))}
            </Grid>
            <Pager>
              <PageSize defaultValue="10"><option>10</option></PageSize>
              <Divider $before={8} />
              <PagerBtn><PagerGlyph d="M1 1h2v12H1zM11 1v12L4 7z" /></PagerBtn>
              <PagerBtn><PagerGlyph d="M9 1v12L2 7z" /></PagerBtn>
              <Divider $after={9} />
              <PagerLabel>第</PagerLabel>
              <PageInput>1</PageInput>
              <PagerLabel>共1页</PagerLabel>
              <Divider $before={8} />
              <PagerBtn><PagerGlyph d="M3 1v12l7-6z" /></PagerBtn>
              <PagerBtn><PagerGlyph d="M1 1v12l7-6zM9 1h2v12H9z" /></PagerBtn>
              <Divider />
              <PagerBtn>
                <IconSvg viewBox="0 0 14 14" $size={14}>
                  <path d="M9.500 3.200A5 5 0 1 0 12 7.500" fill="none" stroke="#666" strokeWidth="1.800" />
                  <path d="M7 .5l4 2.800-4 2.200z" fill="#666" />
                </IconSvg>
              </PagerBtn>
              <PagerInfo>显示1到2,共2记录</PagerInfo>
            </Pager>
            <Below />
          </Panel>
        </Main>
      </Body>
      <Watermark>CSDN @说书客啊</Watermark>
    </Page>
  );
}
